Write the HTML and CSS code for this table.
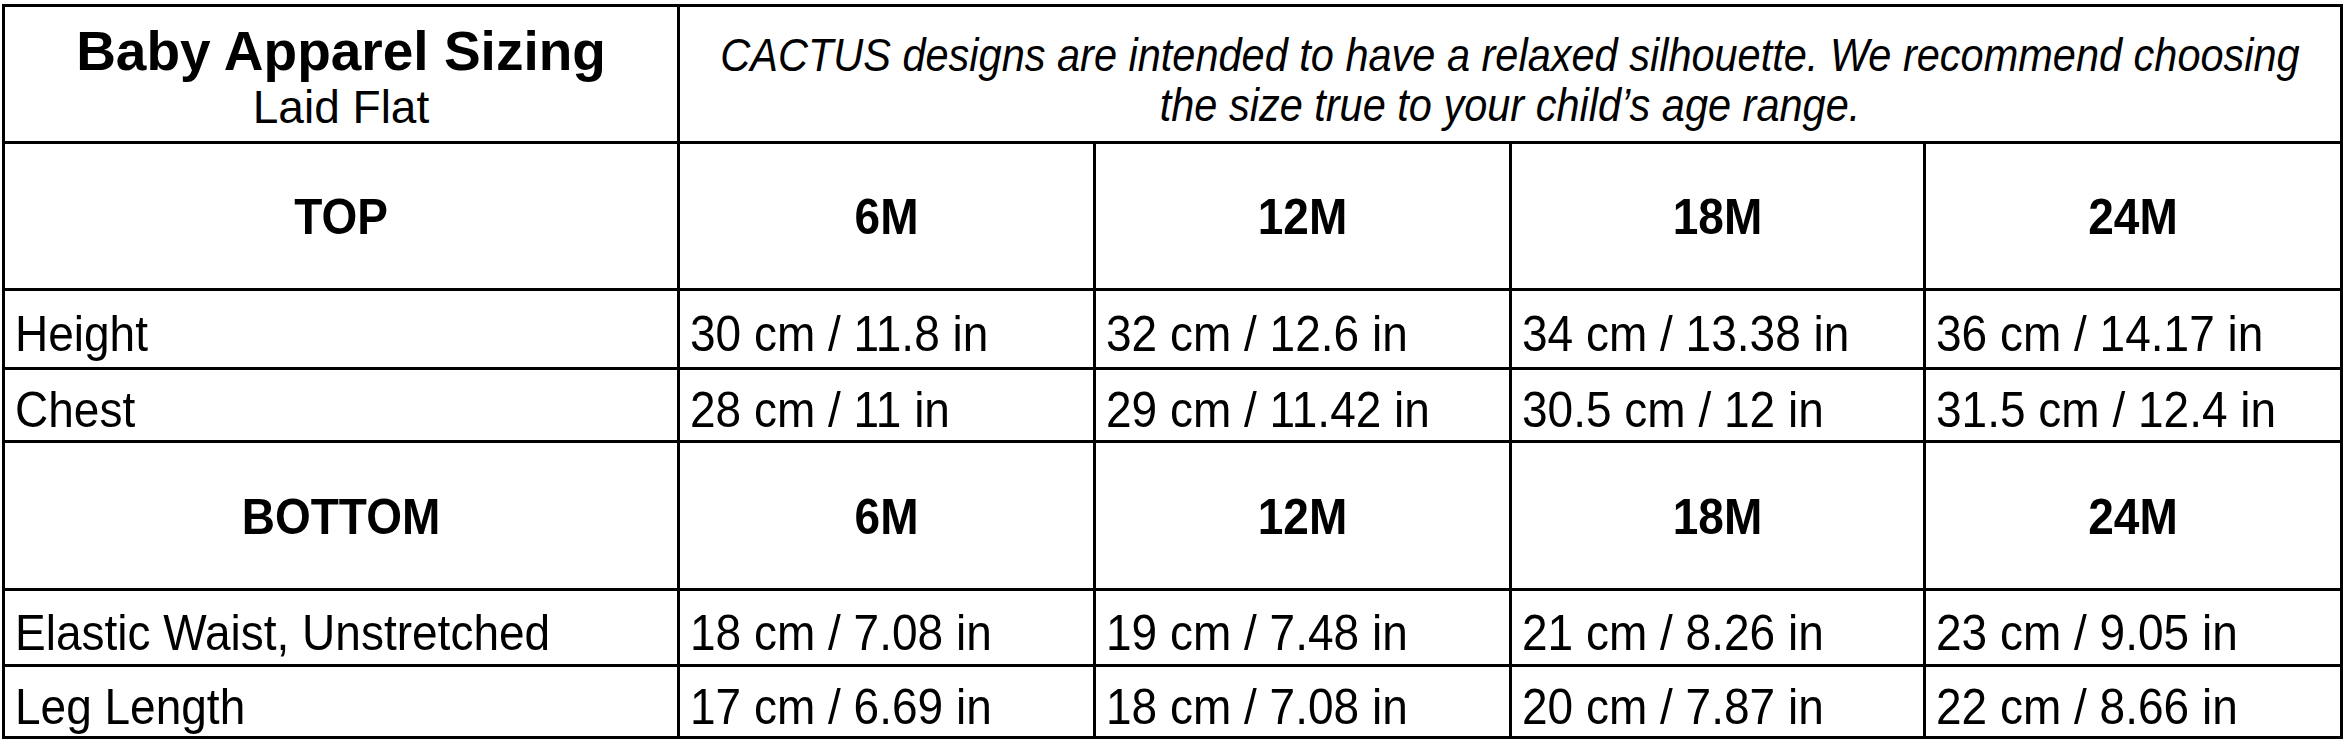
FILE: index.html
```html
<!DOCTYPE html>
<html lang="en">
<head>
<meta charset="utf-8">
<title>Baby Apparel Sizing</title>
<link rel="stylesheet" href="styles.css">
</head>
<body>
<div class="page">
  <div class="chart">
    <div class="cell title-cell">
      <div class="title">Baby Apparel Sizing</div>
      <div class="subtitle">Laid Flat</div>
    </div>
    <div class="cell note-cell">
      <p class="note">CACTUS designs are intended to have a relaxed silhouette. We recommend choosing<br>the size true to your child’s age range.</p>
    </div>

    <div class="cell head"><span class="t">TOP</span></div>
    <div class="cell head"><span class="t">6M</span></div>
    <div class="cell head"><span class="t">12M</span></div>
    <div class="cell head"><span class="t">18M</span></div>
    <div class="cell head"><span class="t">24M</span></div>

    <div class="cell data"><span class="t">Height</span></div>
    <div class="cell data"><span class="t">30 cm / 11.8 in</span></div>
    <div class="cell data"><span class="t">32 cm / 12.6 in</span></div>
    <div class="cell data"><span class="t">34 cm / 13.38 in</span></div>
    <div class="cell data"><span class="t">36 cm / 14.17 in</span></div>

    <div class="cell data"><span class="t">Chest</span></div>
    <div class="cell data"><span class="t">28 cm / 11 in</span></div>
    <div class="cell data"><span class="t">29 cm / 11.42 in</span></div>
    <div class="cell data"><span class="t">30.5 cm / 12 in</span></div>
    <div class="cell data"><span class="t">31.5 cm / 12.4 in</span></div>

    <div class="cell head"><span class="t">BOTTOM</span></div>
    <div class="cell head"><span class="t">6M</span></div>
    <div class="cell head"><span class="t">12M</span></div>
    <div class="cell head"><span class="t">18M</span></div>
    <div class="cell head"><span class="t">24M</span></div>

    <div class="cell data"><span class="t">Elastic Waist, Unstretched</span></div>
    <div class="cell data"><span class="t">18 cm / 7.08 in</span></div>
    <div class="cell data"><span class="t">19 cm / 7.48 in</span></div>
    <div class="cell data"><span class="t">21 cm / 8.26 in</span></div>
    <div class="cell data"><span class="t">23 cm / 9.05 in</span></div>

    <div class="cell data"><span class="t">Leg Length</span></div>
    <div class="cell data"><span class="t">17 cm / 6.69 in</span></div>
    <div class="cell data"><span class="t">18 cm / 7.08 in</span></div>
    <div class="cell data"><span class="t">20 cm / 7.87 in</span></div>
    <div class="cell data"><span class="t">22 cm / 8.66 in</span></div>
  </div>
</div>
</body>
</html>
```

FILE: styles.css
```css
* { box-sizing: border-box; }

html, body {
  margin: 0;
  padding: 0;
  background: #ffffff;
}

body {
  font-family: "Liberation Sans", Arial, sans-serif;
  color: #000000;
}

.page {
  padding: 4px 0 0 2px;
}

.chart {
  display: grid;
  width: 2341px;
  grid-template-columns: 672px 413px 413px 411px 414px;
  grid-template-rows: 134px 144px 76px 70px 145px 73px 69px;
  gap: 3px;
  padding: 3px;
  background: #000000;
}

.cell {
  background: #ffffff;
  display: flex;
  align-items: center;
}

.t {
  display: inline-block;
  transform: scaleY(1.1);
}

.title-cell {
  flex-direction: column;
  justify-content: center;
  align-items: center;
  padding-top: 8px;
}

.title {
  font-weight: bold;
  font-size: 55px;
  line-height: 58px;
}

.subtitle {
  font-size: 46px;
  line-height: 54px;
}

.note-cell {
  grid-column: 2 / 6;
  justify-content: center;
  padding-top: 11px;
}

.note {
  margin: 0;
  font-style: italic;
  font-size: 41.5px;
  line-height: 45px;
  text-align: center;
  transform: scaleY(1.12);
}

.head {
  justify-content: center;
  font-weight: bold;
  font-size: 46px;
}

.data {
  font-size: 46px;
  padding: 8px 0 0 10px;
  white-space: nowrap;
}
```
